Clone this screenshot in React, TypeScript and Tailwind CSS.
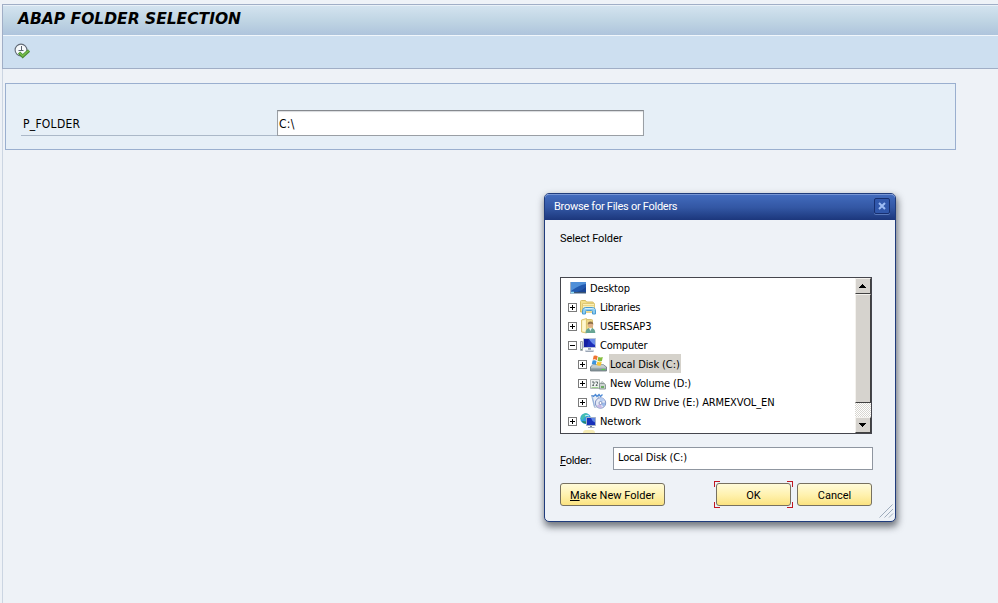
import type { ReactNode } from "react";

const DesktopIcon = () => (
    <svg width="16" height="16" viewBox="0 0 16 16">
        <rect x="0" y="2" width="16" height="12" fill="#9fb0c6" />
        <rect x="1" y="2" width="15" height="11" fill="#2259ae" />
        <path d="M1 2h15v2Q9 5 1 11z" fill="#4f8fd8" />
        <path d="M7 12q5-1 9-5v5z" fill="#1a4595" />
        <path d="M1 12.500h15" stroke="#3d5674" />
        <path d="M1 12.500h3" stroke="#8fdcf4" strokeWidth="1.600" />
    </svg>
);

const LibrariesIcon = () => (
    <svg width="16" height="16" viewBox="0 0 16 16">
        <path d="M.5 2.500q0-1 1-1h4l1 1.500h6q1 0 1 1V13H.5z" fill="#f4e08b" stroke="#d6bd62" />
        <path d="M2.500 4.500h12V13h-12z" fill="#fbf0b8" stroke="#dfc876" />
        <path d="M3 6.500h11" stroke="#ead687" />
        <path d="M2.500 15v-3q0-3.500 3-3.500h7q3 0 3 3.500v3h-3v-2.500q0-1-1-1h-5q-1 0-1 1V15z" fill="#8ccdf1" stroke="#4a9bd2" />
        <path d="M4 10.500q.5-1 2-1h6.500q1.500 0 2 1" fill="none" stroke="#d3eefb" />
    </svg>
);

const UserIcon = () => (
    <svg width="16" height="16" viewBox="0 0 16 16">
        <path d="M6.500 1.500h5q1 0 1 1v11h-6z" fill="#efd885" stroke="#d8c070" />
        <path d="M1.500 2l5-1.500v14.500l-5-1z" fill="#faeeaf" stroke="#dcc574" />
        <path d="M2.500 3l3-1v11.500l-3-.5z" fill="#fdf7d2" />
        <path d="M5.500 15q0-5 5-5 4.800 0 4.800 5z" fill="#67a594" />
        <path d="M9 10l1.300 3 1.700-3z" fill="#eef4f2" />
        <circle cx="10.500" cy="7" r="2.700" fill="#ddb088" />
        <path d="M7.700 6.600q0-3.200 2.800-3.200t2.800 3.200q-2-1.600-5.600 0z" fill="#8d7048" />
    </svg>
);

const ComputerIcon = () => (
    <svg width="16" height="16" viewBox="0 0 16 16">
        <path d="M.5 4.500h2v9h-2z" fill="#e8ebee" stroke="#a2aab2" />
        <path d="M1 12.500h1" stroke="#5dab58" />
        <path d="M3.500 1.500h12v9h-12z" fill="#1d2fb8" stroke="#b9c3d4" />
        <path d="M9 2h6v6q-3-1-6-6z" fill="#6a8deb" />
        <path d="M4 2h4.500L7 10H4z" fill="#1520a2" />
        <path d="M8 11h3v2H8z" fill="#9aa5b8" />
        <path d="M5 13.500h9" stroke="#d0d7e0" strokeWidth="1.500" />
        <path d="M5.500 14.500h8" stroke="#9ba6b6" />
    </svg>
);

const LocalDiskIcon = () => (
    <svg width="17" height="17" viewBox="0 0 17 17">
        <path d="M3 9.500h10l3.500 2.500v4H.5v-4z" fill="#87969b" stroke="#6a777d" strokeWidth=".8" />
        <path d="M3 9.500h10l3 2.700H1z" fill="#c4cdd0" />
        <path d="M1 12.800h15" stroke="#d7dee0" strokeWidth=".8" />
        <path d="M11.500 14.500h3.500" stroke="#58cf4e" strokeWidth="1.200" />
        <path d="M3.700.8q2-1 4 .5L6.800 5.200q-2-1.400-4-.5z" fill="#ee7430" />
        <path d="M8.400 1.800q2 1.200 4.400.3l-.9 3.900q-2.300.9-4.400-.3z" fill="#84bd3c" />
        <path d="M2.600 5.500q2-.9 4 .5l-.9 3.900q-2-1.400-4-.5z" fill="#3c93dc" />
        <path d="M7.300 6.500q2.100 1.200 4.400.3l-.8 3.600q-2.300.9-4.400-.3z" fill="#f6c536" />
    </svg>
);

const VolumeIcon = () => (
    <svg width="17" height="16" viewBox="0 0 17 16">
        <path d="M.5 4.500h9v9h-9z" fill="#eef0ef" stroke="#b4b9b9" />
        <path d="M2 7h2v1.500l-1.500 2H4M5.500 7h2v1.500L6 10.500h1.500" fill="none" stroke="#5b6868" />
        <path d="M1.500 12.500h7" stroke="#9ed08f" />
        <path d="M9.500 8.500h5l1 1.500v4h-6z" fill="#ccd3d1" stroke="#8c9997" />
        <path d="M10.500 8.500q1.500-3.500 3.500 0" fill="none" stroke="#9aa8a5" />
        <path d="M11 12h3" stroke="#56a648" strokeWidth="1.600" />
    </svg>
);

const DvdIcon = () => (
    <svg width="17" height="17" viewBox="0 0 17 17">
        <path d="M1.500 2.500h7v11l-4 1z" fill="#e9eef6" stroke="#b8c4d5" />
        <path d="M1.500 2.500l2 1 2-2 1.500 2 2-2 1.500 2 2-2" fill="none" stroke="#4f8bd6" strokeWidth="1.300" />
        <path d="M2.500 4.500l2 9" stroke="#8db0df" />
        <circle cx="10.500" cy="10" r="5.200" fill="#e3e7f4" stroke="#7f92c4" />
        <path d="M10.500 10l-1-4.700q3.500-.8 5 1.700z" fill="#b7cdf2" />
        <path d="M10.500 10l1.500 4.700q-3.500.8-5.200-1.600z" fill="#c9b8e4" />
        <path d="M10.500 10l4.800-.5q.3 3-2 4.300z" fill="#9bb9ea" />
        <circle cx="10.500" cy="10" r="1.500" fill="#fff" stroke="#7183b4" strokeWidth=".8" />
    </svg>
);

const NetworkIcon = () => (
    <svg width="17" height="16" viewBox="0 0 17 16">
        <circle cx="5.600" cy="5.600" r="5.300" fill="#2f9fe0" />
        <path d="M3 1.200Q6-.5 8 1L6.500 3.500 4 4.500 3 7 .7 6q0-3 2.300-4.800z" fill="#46bfae" />
        <path d="M2 8l4 .5v2.300q-3-.3-4.300-2.800z" fill="#26856b" />
        <path d="M5 3q2-1.500 4 0" fill="none" stroke="#c9effa" />
        <path d="M6.500 4.500h9v8h-9z" fill="#1730bb" stroke="#a3b0c6" />
        <path d="M11 5h4v4.500Q12 8.500 11 5z" fill="#5f86e6" />
        <path d="M10 13h2v1h-2z" fill="#76839c" />
        <path d="M8 14.500h6.500" stroke="#a4b0c1" />
    </svg>
);

const ExecuteIcon = () => (
    <svg width="17" height="17" viewBox="0 0 17 17">
        <circle cx="7" cy="7" r="5.900" fill="#f6f9fb" stroke="#626b77" strokeWidth="1.100" />
        <path d="M7.500 3v4.500M4.500 7.500h5" stroke="#59626e" />
        <path d="M5 9.700l3.700 3.500L15 7.500" fill="none" stroke="#478a30" strokeWidth="3.200" />
        <path d="M5.300 9.700l3.400 3.200L14.700 7.500" fill="none" stroke="#78bd4c" strokeWidth="1.500" />
    </svg>
);

const Expander = ({ open }: { open?: boolean }) => (
    <svg className="mt-[2px] mr-[3px] shrink-0" width="9" height="9" viewBox="0 0 9 9" shapeRendering="crispEdges">
        <path d="M.5 .5h8v8h-8z" fill="#fff" stroke="#7b7b7b" />
        <path d="M2 4.500h5" stroke="#000" />
        {!open && <path d="M4.500 2v5" stroke="#000" />}
    </svg>
);

type Item = {
    label: string;
    icon: ReactNode;
    indent: string;
    tracking: string;
    expander?: "plus" | "minus";
    selected?: boolean;
};

const items: Item[] = [
    { label: "Desktop", icon: <DesktopIcon />, indent: "pl-[9px]", tracking: "tracking-[-0.15px]" },
    { label: "Libraries", icon: <LibrariesIcon />, indent: "pl-[7px]", tracking: "tracking-[-0.3px]", expander: "plus" },
    { label: "USERSAP3", icon: <UserIcon />, indent: "pl-[7px]", tracking: "tracking-[-0.1px]", expander: "plus" },
    { label: "Computer", icon: <ComputerIcon />, indent: "pl-[7px]", tracking: "tracking-[-0.25px]", expander: "minus" },
    { label: "Local Disk (C:)", icon: <LocalDiskIcon />, indent: "pl-[17px]", tracking: "tracking-[-0.1px]", expander: "plus", selected: true },
    { label: "New Volume (D:)", icon: <VolumeIcon />, indent: "pl-[17px]", tracking: "tracking-[-0.15px]", expander: "plus" },
    { label: "DVD RW Drive (E:) ARMEXVOL_EN", icon: <DvdIcon />, indent: "pl-[17px]", tracking: "tracking-[-0.12px]", expander: "plus" },
    { label: "Network", icon: <NetworkIcon />, indent: "pl-[7px]", tracking: "tracking-[-0.05px]", expander: "plus" },
];

const ScrollButton = ({ up }: { up?: boolean }) => (
    <div className="flex h-4 w-4 shrink-0 items-center justify-center border border-t-[#f4f2ee] border-r-[#404040] border-b-[#404040] border-l-[#f4f2ee] bg-[#d6d3ce]">
        <svg className="mr-px" width="7" height="4" viewBox="0 0 7 4" shapeRendering="crispEdges">
            <path d={up ? "M3 0h1v1h1v1h1v1h1v1H0V3h1V2h1V1h1z" : "M0 0h7v1H6v1H5v1H4v1H3V3H2V2H1V1H0z"} />
        </svg>
    </div>
);

const Button = ({ children, className }: { children: ReactNode; className: string }) => (
    <button
        className={`h-[23px] rounded-[3px] border border-[#777160] bg-linear-to-b from-[#fffbd9] via-[#fff2b0] to-[#fbe380] pt-px text-[11px] leading-[21px] text-black ${className}`}
    >
        {children}
    </button>
);

const FolderDialog = () => (
    <div className="absolute top-[193px] left-[544px] flex h-[329px] w-[352px] flex-col overflow-visible rounded-[5px] border border-[#203c7c] bg-[#eef2f7] font-['Roboto',sans-serif] text-[11px] text-black shadow-[1px_4px_7px_1px_rgba(50,55,65,0.65)]">
        <div className="flex h-[26px] shrink-0 items-center justify-between rounded-t-[4px] border-t border-[#7695d4] bg-linear-to-b from-[#426bbd] via-[#3357a4] to-[#1c377c] pr-[5px] pb-px pl-[9px]">
            <span className="tracking-[-0.27px] text-white">Browse for Files or Folders</span>
            <div className="mb-[2px] flex h-4 w-4 items-center justify-center rounded-[2px] border border-[#172f70] bg-[#3158ac] shadow-[0_1px_0_#5877b9]">
                <svg width="8" height="8" viewBox="0 0 8 8">
                    <path d="M1 1l6 6M7 1L1 7" stroke="#9dbcf4" strokeWidth="2" />
                </svg>
            </div>
        </div>

        <div className="flex flex-col px-[15px] pt-[11px]">
            <span className="leading-[15px] tracking-[-0.1px]">Select Folder</span>

            <div className="mt-[31px] flex h-[157px] w-[312px] border border-[#45464d] bg-white font-['DejaVu_Sans_Condensed','DejaVu_Sans',sans-serif]">
                <div className="h-full grow overflow-hidden">
                    {items.map((item) => (
                        <div key={item.label} className={`flex h-[19px] items-center ${item.indent}`}>
                            {item.expander && <Expander open={item.expander === "minus"} />}
                            <span className="w-[17px] shrink-0">{item.icon}</span>
                            <span
                                className={`ml-[2px] h-[19px] px-px leading-[22px] whitespace-nowrap ${item.tracking} ${item.selected ? "bg-[#d5d2cb]" : ""}`}
                            >
                                {item.label}
                            </span>
                        </div>
                    ))}
                    <div className="ml-[22px] h-[3px] w-3 rounded-t bg-[#f6ecb4]" />
                </div>
                <div className="flex w-4 shrink-0 flex-col bg-[repeating-conic-gradient(#d8d6d0_0_25%,#ffffff_0_50%)] bg-[length:2px_2px]">
                    <ScrollButton up />
                    <div className="h-[109px] border border-t-[#f4f2ee] border-r-[#404040] border-b-[#404040] border-l-[#f4f2ee] bg-[#d6d3ce]" />
                    <div className="grow" />
                    <ScrollButton />
                </div>
            </div>

            <div className="mt-[13px] flex h-[23px] items-center">
                <span className="w-[53px] pt-[5px] tracking-[-0.3px]">
                    <u>F</u>older:
                </span>
                <div className="h-[23px] w-[260px] border border-[#8f96a0] bg-white pl-1 font-['DejaVu_Sans_Condensed','DejaVu_Sans',sans-serif] leading-[19px] tracking-[-0.15px]">
                    Local Disk (C:)
                </div>
            </div>

            <div className="mt-[13px] flex w-[312px] items-center">
                <Button className="w-[105px]">
                    <u>M</u>ake New Folder
                </Button>
                <div className="relative ml-[51px] flex">
                    <Button className="w-[75px]">OK</Button>
                    <i className="absolute -top-[2px] -left-[2px] h-[6px] w-[6px] border-t border-l border-[#c01822]" />
                    <i className="absolute -top-[2px] -right-[2px] h-[6px] w-[6px] border-t border-r border-[#c01822]" />
                    <i className="absolute -bottom-[2px] -left-[2px] h-[6px] w-[6px] border-b border-l border-[#c01822]" />
                    <i className="absolute -right-[2px] -bottom-[2px] h-[6px] w-[6px] border-r border-b border-[#c01822]" />
                </div>
                <Button className="ml-[6px] w-[75px]">Cancel</Button>
            </div>
        </div>

        <svg className="absolute right-[1px] bottom-[3px]" width="15" height="14" viewBox="0 0 15 14">
            <path d="M.5 13.500l13-13M5.500 13.500l8.500-8.500M10 13.500l4-4" stroke="#9eacbc" />
        </svg>
    </div>
);

const App = () => {
    return (
        <div className="relative h-[603px] w-[998px] overflow-hidden bg-[#eef2f7] pt-1 pl-[2px] text-black">
            <div className="h-[599px] border-l border-[#cbd5e2]">
                <header className="-ml-px border border-r-0 border-[#a0aec6]">
                    <div className="flex h-[30px] items-center border-t border-[#e9f1f8] bg-linear-to-b from-[#d3e3ef] via-[#c0d5e4] to-[#aec4dc] pb-px pl-[15px]">
                        <h1 className="font-['DejaVu_Sans',sans-serif] text-[15.500px] leading-none font-bold whitespace-nowrap italic">
                            ABAP FOLDER SELECTION
                        </h1>
                    </div>
                    <div className="flex h-[33px] items-center border-t border-[#f0f6fb] bg-[#cddff0] pb-px pl-[11px]">
                        <ExecuteIcon />
                    </div>
                </header>

                <section className="mt-[14px] ml-[2px] h-[67px] w-[951px] border border-[#9aafcf] bg-[#e6eff7] pt-[26px] pl-[15px] font-['DejaVu_Sans_Condensed','DejaVu_Sans',sans-serif] text-xs">
                    <div className="flex h-[26px] w-[623px]">
                        <label className="h-[26px] w-64 border-b border-[#abb8c8] pl-[2px] leading-[28px] tracking-[0.25px]">P_FOLDER</label>
                        <div className="h-[26px] w-[367px] border border-[#9a9fa5] border-t-[#85898e] bg-white pl-px leading-[26px] tracking-[0.3px] shadow-[inset_0_1px_1px_#d8dadd]">
                            C:\
                        </div>
                    </div>
                </section>
            </div>

            <FolderDialog />
        </div>
    );
};

export default App;
